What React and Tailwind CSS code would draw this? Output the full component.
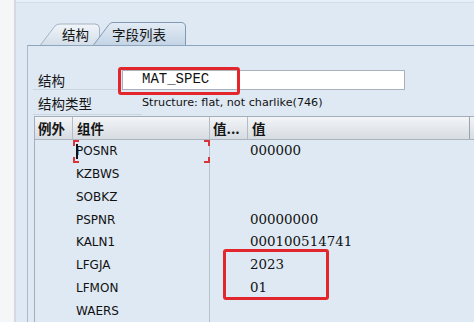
import React from "react";

const rows = [
  { name: "POSNR", value: "000000" },
  { name: "KZBWS", value: "" },
  { name: "SOBKZ", value: "" },
  { name: "PSPNR", value: "00000000" },
  { name: "KALN1", value: "000100514741" },
  { name: "LFGJA", value: "2023" },
  { name: "LFMON", value: "01" },
  { name: "WAERS", value: "" },
];

function Tab({ label, active, className, pad }) {
  return (
    <div className={"relative h-[23px] flex items-center pt-[5px] " + className}>
      <svg className="absolute inset-0 w-full h-full" preserveAspectRatio="none">
        <defs>
          <linearGradient id={active ? "ta" : "ti"} x1="0" y1="0" x2="0" y2="1">
            <stop offset="0" stopColor={active ? "#e3ecf5" : "#f1f5f9"} />
            <stop offset="1" stopColor={active ? "#c4d4e5" : "#d3dee9"} />
          </linearGradient>
        </defs>
        {active ? (
          <path
            d="M0.5,23 L16,2.5 Q17.5,0.5 20,0.5 L88,0.5 Q92.5,0.5 92.5,5 L92.5,23"
            fill="url(#ta)"
            stroke="#8199b3"
          />
        ) : (
          <path
            d="M0.5,23 L15,4 Q17,2 20,2 L55,2 Q59,2 59.5,6 L59.5,23"
            fill="url(#ti)"
            stroke="#a2b3c5"
          />
        )}
      </svg>
      <span className={"relative text-[13.5px] leading-[15px] text-[#151515] " + pad}>{label}</span>
    </div>
  );
}

export default function App() {
  return (
    <div className="relative w-[474px] h-[322px] overflow-hidden flex bg-[#dfe9f4] font-['DejaVu_Sans','Noto_Sans_CJK_SC',sans-serif] text-[#151515]">
      <div className="w-[16px] shrink-0 bg-[#f5f6f7] border-r-2 border-[#d3d9df]" />

      <div className="flex-1 flex flex-col min-w-0">
        <div className="h-[3px] border-b border-[#d3dde8] bg-[#e6eef7]" />

        {/* tabs */}
        <div className="mt-[19px] h-[23px] flex pl-[24px]">
          <Tab label="结构" className="w-[60px]" pad="pl-[22px]" />
          <Tab label="字段列表" active className="w-[93px] -ml-[7px]" pad="pl-[19px]" />
        </div>
        <div className="h-[2px] ml-[11px] bg-[#8ea5be] rounded-tl-[3px]" />

        {/* panel */}
        <div className="flex-1 ml-[11px] border-l border-[#aab9c9] flex flex-col">
          <div className="mt-[23px] h-[21px] flex items-center">
            <div className="w-[89px] ml-[5px] pl-[5px] pt-[4px] h-full flex items-center border-b border-[#cbd6e2] text-[13.5px]">
              结构
            </div>
            <div className="w-[283px] h-[20px] bg-white border border-[#a9b2bc] pl-[19px] flex items-center font-['Liberation_Mono',monospace] text-[14px] text-[#111]">
              MAT_SPEC
            </div>
          </div>

          <div className="mt-[2px] h-[23px] flex items-center">
            <div className="w-[109px] ml-[5px] pl-[5px] pt-[2px] h-full flex items-center border-b border-[#cbd6e2] text-[13.5px]">
              结构类型
            </div>
            <div className="text-[11.2px] text-[#111]">Structure: flat, not charlike(746)</div>
          </div>

          {/* table */}
          <div className="mt-[1px] ml-[6px] flex-1 border-l border-t border-[#a3aeba] flex flex-col">
            <div className="h-[23px] shrink-0 grid grid-cols-[38px_137px_38px_222px_1fr] border-b border-[#aab4bf] bg-gradient-to-b from-[#f3f5f7] to-[#d6dce2] text-[13.5px] font-['Noto_Sans_CJK_SC',sans-serif] font-semibold">
              <div className="pl-[3px] flex items-center border-r border-[#b3bcc6]">例外</div>
              <div className="pl-[4px] flex items-center border-r border-[#b3bcc6]">组件</div>
              <div className="pl-[3px] flex items-center border-r border-[#b3bcc6]">值...</div>
              <div className="pl-[4px] flex items-center border-r border-[#9aa4af]">值</div>
              <div />
            </div>
            {rows.map((r) => (
              <div key={r.name} className="h-[22.75px] shrink-0 grid grid-cols-[38px_137px_38px_1fr]">
                <div />
                <div className="pl-[3px] flex items-center border-r border-[#b7c2ce] text-[12px] text-[#111]">{r.name}</div>
                <div />
                <div className="pl-[2px] flex items-center font-['DejaVu_Serif',serif] text-[13.4px] text-[#111]">{r.value}</div>
              </div>
            ))}
          </div>
        </div>
      </div>

      {/* annotations */}
      <div className="absolute left-[118px] top-[67px] w-[122px] h-[28px] border-[3px] border-[#e3262b] rounded-[3px]" />
      <div className="absolute left-[223px] top-[249px] w-[106px] h-[51px] border-[3px] border-[#e3262b] rounded-[3px]" />

      <div className="absolute left-[73px] top-[140px] w-[6px] h-[6px] border-l-2 border-t-2 border-[#d8343a]" />
      <div className="absolute left-[204px] top-[140px] w-[6px] h-[6px] border-r-2 border-t-2 border-[#d8343a]" />
      <div className="absolute left-[73px] top-[157px] w-[6px] h-[6px] border-l-2 border-b-2 border-[#d8343a]" />
      <div className="absolute left-[204px] top-[157px] w-[6px] h-[6px] border-r-2 border-b-2 border-[#d8343a]" />
      <div className="absolute left-[76px] top-[144px] w-[2px] h-[15px] bg-[#111]" />
    </div>
  );
}
